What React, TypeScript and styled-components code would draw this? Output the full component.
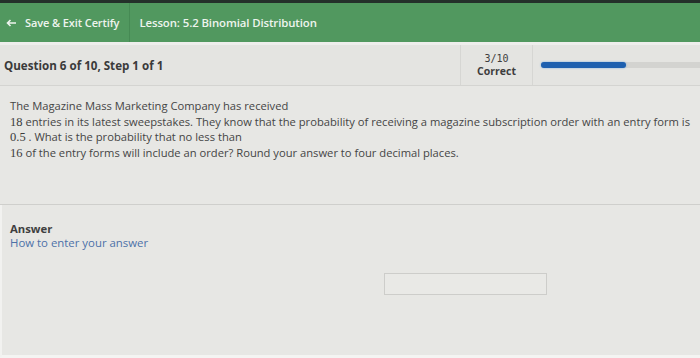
import React from "react";
import styled, { createGlobalStyle } from "styled-components";

const Global = createGlobalStyle`
  html, body {
    margin: 0;
    padding: 0;
    background: #e6e6e3;
    font-family: "Open Sans", "Noto Sans", sans-serif;
  }
`;

const Page = styled.div`
  width: 700px;
  height: 358px;
  overflow: hidden;
  background: #e7e7e4;
  display: flex;
  flex-direction: column;
  border-top: 3px solid #24302a;
  box-sizing: border-box;
`;

const Header = styled.header`
  height: 39px;
  background: #51985f;
  display: flex;
  align-items: stretch;
  border-bottom: 3px solid #eeeeec;
`;

const HeaderItem = styled.div<{ $divider?: boolean }>`
  display: flex;
  align-items: center;
  gap: 8px;
  padding: ${(p) => (p.$divider ? "0 10px 0 6px" : "0 9px 0 9px")};
  color: #eef4ee;
  font-size: ${(p) => (p.$divider ? "11px" : "11.4px")};
  font-weight: 600;
  letter-spacing: -0.1px;
  border-right: ${(p) => (p.$divider ? "1px solid #468a54" : "none")};
`;

const QuestionBar = styled.div`
  height: 40px;
  display: flex;
  align-items: stretch;
  background: #e4e4e1;
  border-bottom: 1px solid #d4d4d1;
`;

const QuestionTitle = styled.div`
  flex: 0 0 456px;
  display: flex;
  align-items: center;
  padding-left: 4px;
  font-size: 11.6px;
  font-weight: 700;
  color: #3a3a3a;
  border-right: 1px solid #d6d6d3;
`;

const Stats = styled.div`
  flex: 0 0 71px;
  display: flex;
  flex-direction: column;
  align-items: center;
  justify-content: center;
  color: #3d3d3d;
  border-right: 1px solid #d6d6d3;
  line-height: 12px;
`;

const Score = styled.span`
  font-family: "DejaVu Sans Mono", "Liberation Mono", monospace;
  font-size: 10px;
`;

const Label = styled.span`
  font-size: 10.5px;
  font-weight: 700;
`;

const ProgressWrap = styled.div`
  flex: 1;
  display: flex;
  align-items: center;
  padding-left: 8px;
`;

const Track = styled.div`
  flex: 1;
  height: 6px;
  background: #d3d3d0;
  border-radius: 3px 0 0 3px;
  display: flex;
`;

const Fill = styled.div`
  height: 100%;
  background: #1d5faf;
  border-radius: 3px;
  box-shadow: 0 0 2px #6aa3e0;
`;

const Body = styled.section`
  height: 119px;
  padding: 12px 10px 0 10px;
  box-sizing: border-box;
  border-bottom: 1px solid #cfcfcc;
  font-size: 11.2px;
  line-height: 15.6px;
  color: #454545;
`;

const Line = styled.div`
  white-space: nowrap;
  height: 15.6px;
`;

const Math = styled.span`
  font-family: "Liberation Serif", "DejaVu Serif", serif;
  font-size: 12.5px;
  line-height: 1;
  color: #3c3c3c;
`;

const AnswerArea = styled.section`
  flex: 1;
  padding: 17px 9px 0 8px;
  display: flex;
  flex-direction: column;
  border-left: 2px solid #f2f2f0;
  border-bottom: 3px solid #f4f4f2;
`;

const AnswerLabel = styled.div`
  font-size: 11.3px;
  font-weight: 700;
  color: #3f3f3f;
  line-height: 14px;
`;

const HelpLink = styled.a`
  font-size: 11.4px;
  color: #4d71a8;
  line-height: 14px;
  text-decoration: none;
`;

const InputRow = styled.div`
  display: flex;
  padding-left: 374px;
  margin-top: 23px;
`;

const AnswerInput = styled.div`
  width: 163px;
  height: 22px;
  box-sizing: border-box;
  border: 1px solid #cdcdca;
  background: #e9e9e6;
`;

const Arrow = () => (
  <svg width="11" height="8" viewBox="0 0 11 8">
    <path d="M10 4H2M4.5 1L1.5 4l3 3" stroke="#eef4ee" strokeWidth="1.6" fill="none" />
  </svg>
);

export default function App() {
  const correct = 3;
  const total = 10;
  return (
    <>
      <Global />
      <Page>
        <Header>
          <HeaderItem $divider>
            <Arrow />
            Save &amp; Exit Certify
          </HeaderItem>
          <HeaderItem>Lesson: 5.2 Binomial Distribution</HeaderItem>
        </Header>
        <QuestionBar>
          <QuestionTitle>Question 6 of 10, Step 1 of 1</QuestionTitle>
          <Stats>
            <Score>
              {correct}/{total}
            </Score>
            <Label>Correct</Label>
          </Stats>
          <ProgressWrap>
            <Track>
              <Fill style={{ width: `${(correct / total) * 100 * 1.78}%` }} />
            </Track>
          </ProgressWrap>
        </QuestionBar>
        <Body>
          <Line>The Magazine Mass Marketing Company has received</Line>
          <Line>
            <Math>18</Math> entries in its latest sweepstakes. They know that the probability of
            receiving a magazine subscription order with an entry form is
          </Line>
          <Line>
            <Math>0.5</Math> . What is the probability that no less than
          </Line>
          <Line>
            <Math>16</Math> of the entry forms will include an order? Round your answer to four
            decimal places.
          </Line>
        </Body>
        <AnswerArea>
          <AnswerLabel>Answer</AnswerLabel>
          <HelpLink href="#">How to enter your answer</HelpLink>
          <InputRow>
            <AnswerInput />
          </InputRow>
        </AnswerArea>
      </Page>
    </>
  );
}
